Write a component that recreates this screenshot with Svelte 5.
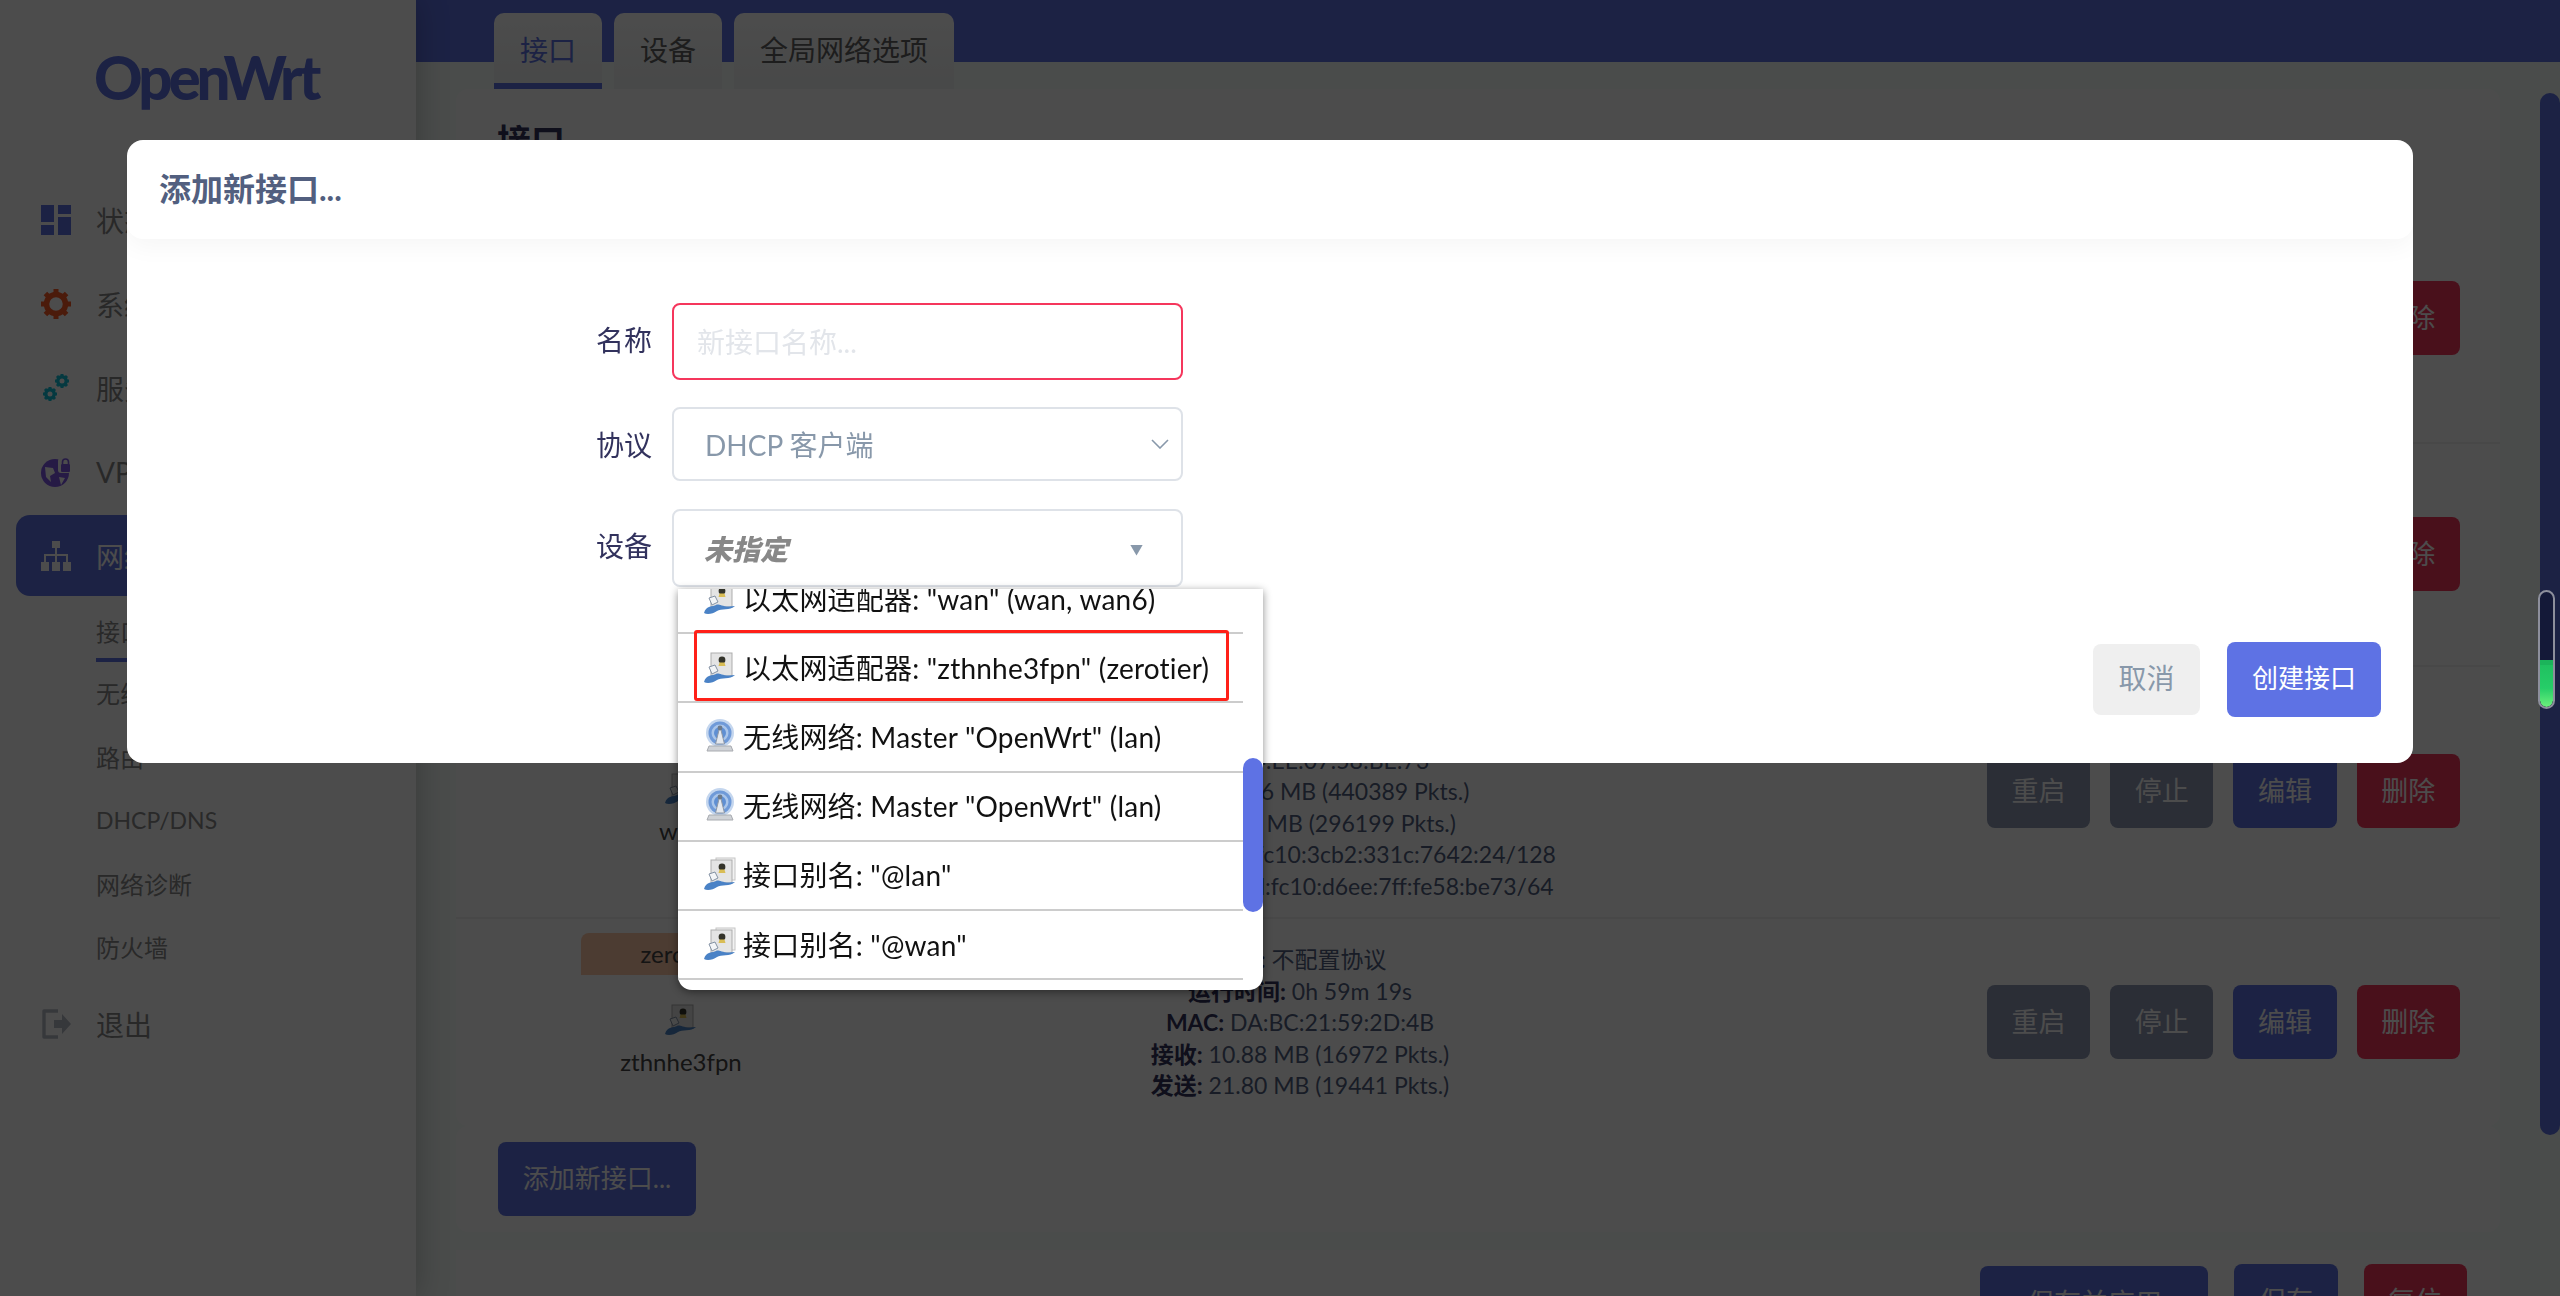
<script>
  const mainMenu = [
    { label: "状态", icon: "status" },
    { label: "系统", icon: "system" },
    { label: "服务", icon: "services" },
    { label: "VPN", icon: "vpn" },
  ];
  const subMenu = ["接口", "无线", "路由", "DHCP/DNS", "网络诊断", "防火墙"];
  const tabs = ["接口", "设备", "全局网络选项"];
  const rowActions = [
    { label: "重启", kind: "muted" },
    { label: "停止", kind: "muted" },
    { label: "编辑", kind: "primary" },
    { label: "删除", kind: "danger" },
  ];
  const wanLines = [
    ["协议:", "DHCP 客户端"],
    ["运行时间:", "0h 59m 40s"],
    ["MAC:", "D4:EE:07:58:BE:73"],
    ["接收:", "1234.56 MB (440389 Pkts.)"],
    ["发送:", "12.45 MB (296199 Pkts.)"],
    ["IPv6:", "fd00:1a2b:3c4:fc10:3cb2:331c:7642:24/128"],
    ["IPv6:", "fd00:1a2b:3c4d:fc10:d6ee:7ff:fe58:be73/64"],
  ];
  const zeroLines = [
    ["协议:", "不配置协议"],
    ["运行时间:", "0h 59m 19s"],
    ["MAC:", "DA:BC:21:59:2D:4B"],
    ["接收:", "10.88 MB (16972 Pkts.)"],
    ["发送:", "21.80 MB (19441 Pkts.)"],
  ];
  const devices = [
    { icon: "ethernet", text: '以太网适配器: "wan" (wan, wan6)' },
    { icon: "ethernet", text: '以太网适配器: "zthnhe3fpn" (zerotier)' },
    { icon: "wifi", text: '无线网络: Master "OpenWrt" (lan)' },
    { icon: "wifi", text: '无线网络: Master "OpenWrt" (lan)' },
    { icon: "alias", text: '接口别名: "@lan"' },
    { icon: "alias", text: '接口别名: "@wan"' },
  ];
</script>

{#snippet menuIcon(name)}
  <svg class="menu-icon" viewBox="0 0 30 30" aria-hidden="true">
    {#if name === "status"}
      <g fill="#5e72e4">
        <rect x="0" y="0" width="13" height="17" />
        <rect x="0" y="20" width="13" height="10" />
        <rect x="17" y="0" width="13" height="9" />
        <rect x="17" y="12" width="13" height="18" />
      </g>
    {:else if name === "system"}
      <g fill="none" stroke="#fb5a26">
        <circle cx="15" cy="15" r="9.5" stroke-width="5.5" />
        <path d="M15 0v5M15 25v5M0 15h5M25 15h5M4.4 4.4l3.5 3.5M22 22l3.6 3.6M4.4 25.6L8 22M22 8l3.6-3.6" stroke-width="5" />
      </g>
    {:else if name === "services"}
      <g fill="none" stroke="#11bfd8">
        <circle cx="9" cy="21" r="4.2" stroke-width="3.4" />
        <path d="M9 14v3M9 25v3M2 21h3M13 21h3M4 16l2 2M12 24l2 2M4 26l2-2M12 18l2-2" stroke-width="3" />
        <circle cx="21" cy="8" r="4.2" stroke-width="3.4" />
        <path d="M21 1v3M21 12v3M14 8h3M25 8h3M16 3l2 2M24 11l2 2M16 13l2-2M24 5l2-2" stroke-width="3" />
      </g>
    {:else if name === "vpn"}
      <circle cx="14" cy="16" r="14" fill="#8059e8" />
      <path d="M4 10l8 1 2 5-5 3 1 6-5-5zM18 20l6 1-4 7z" fill="#fff" />
      <rect x="17" y="1" width="13" height="15" rx="3" fill="#fff" />
      <rect x="20" y="7" width="9" height="8" rx="1" fill="#8059e8" />
      <path d="M21.5 7V5a3 3 0 016 0v2" fill="none" stroke="#8059e8" stroke-width="1.6" />
    {:else if name === "network"}
      <g fill="#fff">
        <rect x="11" y="0" width="8" height="7" />
        <rect x="0" y="21" width="8" height="9" />
        <rect x="11" y="21" width="8" height="9" />
        <rect x="22" y="21" width="8" height="9" />
        <path d="M14 7h2v6h11v8h-2v-6H16v6h-2v-6H5v6H3v-8h11z" />
      </g>
    {:else}
      <g fill="none" stroke="#b6bbc6" stroke-width="3.4">
        <path d="M17 2H3v26h14" stroke-linejoin="round" />
      </g>
      <path d="M13 11h8V5l9 10-9 10v-6h-8z" fill="#b6bbc6" />
    {/if}
  </svg>
{/snippet}

{#snippet deviceIcon(kind)}
  <svg class="device-icon" viewBox="0 0 32 34" aria-hidden="true">
    {#if kind === "wifi"}
      <circle cx="16" cy="14" r="14" fill="#c4d6ee" />
      <circle cx="16" cy="14" r="11.5" fill="#6f9ad8" />
      <circle cx="16" cy="14" r="8.5" fill="#a9c5ea" />
      <circle cx="16" cy="14" r="6" fill="#5f8fd3" />
      <path d="M16 7l4.5 18h-9z" fill="#e4e8ee" stroke="#8d97a5" />
      <circle cx="16" cy="9" r="2.4" fill="#6d7a8a" />
      <path d="M5 27h22l2 5H3z" fill="#cfd2d6" stroke="#a8abb0" />
    {:else}
      {#if kind === "alias"}
        <rect x="12" y="1" width="19" height="22" fill="#f2f2f2" stroke="#c6c6c6" />
      {/if}
      <rect x="7" y="3" width="21" height="23" fill="#e4e4e4" stroke="#adadad" />
      <circle cx="18" cy="10" r="3.4" fill="#33332a" />
      <path d="M15.5 12.5h5l1 3.5h-7z" fill="#d9bd55" />
      <path d="M5 17l6-2 3 6-6 3z" fill="#f2f4f6" stroke="#8492a4" />
      <path d="M0 32c2-8 9-6 12-8s6 3 19 1c-5 5-14 2-18 5s-10 4-13 2z" fill="#4a82c6" />
    {/if}
  </svg>
{/snippet}

{#snippet detailLines(lines)}
  <div class="details">
    {#each lines as [key, val]}
      <div class="line"><b>{key}</b> {val}</div>
    {/each}
  </div>
{/snippet}

{#snippet actions()}
  <div class="actions">
    {#each rowActions as a}
      <button class="btn {a.kind}">{a.label}</button>
    {/each}
  </div>
{/snippet}

<div class="page">
  <aside class="sidebar">
    <div class="logo">OpenWrt</div>
    <nav class="nav">
      {#each mainMenu as item}
        <div class="nav-item">
          {@render menuIcon(item.icon)}
          <span>{item.label}</span>
        </div>
      {/each}
      <div class="nav-item active">
        {@render menuIcon("network")}
        <span>网络</span>
      </div>
      <div class="sub-nav">
        {#each subMenu as item, i}
          <div class="sub-item" class:current={i === 0} class:latin={item === "DHCP/DNS"}>
            <span>{item}</span>
          </div>
        {/each}
      </div>
      <div class="nav-item logout">
        {@render menuIcon("logout")}
        <span>退出</span>
      </div>
    </nav>
  </aside>

  <main class="main">
    <div class="tabs">
      {#each tabs as tab, i}
        <div class="tab" class:selected={i === 0}>{tab}</div>
      {/each}
    </div>
    <section class="card interfaces">
      <h2 class="heading">接口</h2>
      <div class="row row-lan">{@render actions()}</div>
      <div class="row row-wan">{@render actions()}</div>
      <div class="row row-wan6">
        <div class="iface">
          {@render deviceIcon("ethernet")}
          <span class="iface-name">wan</span>
        </div>
        {@render detailLines(wanLines)}
        {@render actions()}
      </div>
      <div class="row row-zero">
        <div class="iface">
          <div class="iface-tag">zerotier</div>
          {@render deviceIcon("ethernet")}
          <span class="iface-name">zthnhe3fpn</span>
        </div>
        {@render detailLines(zeroLines)}
        {@render actions()}
      </div>
    </section>
    <section class="card add-card">
      <button class="btn primary">添加新接口...</button>
    </section>
    <footer class="page-actions">
      <button class="btn primary wide">保存并应用</button>
      <button class="btn primary">保存</button>
      <button class="btn danger">复位</button>
    </footer>
  </main>
  <div class="page-scroll"></div>
</div>

<div class="overlay">
  <div class="modal">
    <h4 class="modal-title">添加新接口...</h4>
    <div class="form">
      <div class="field">
        <span class="field-label raised">名称</span>
        <input class="control invalid" placeholder="新接口名称..." />
      </div>
      <div class="field field-proto">
        <span class="field-label">协议</span>
        <div class="control select">
          <span>DHCP 客户端</span>
          <svg class="chevron" viewBox="0 0 18 10" aria-hidden="true">
            <path d="M1 1l8 8 8-8" fill="none" stroke="#8898aa" stroke-width="1.6" />
          </svg>
        </div>
      </div>
      <div class="field field-device">
        <span class="field-label raised">设备</span>
        <div class="control combo">
          <em>未指定</em>
          <span class="combo-arrow">▼</span>
        </div>
        <div class="dropdown">
          <ul class="device-list">
            {#each devices as d}
              <li class="device-row">
                {@render deviceIcon(d.icon)}
                <span>{d.text}</span>
              </li>
            {/each}
          </ul>
          <div class="dropdown-thumb"></div>
        </div>
        <div class="annotation"></div>
      </div>
    </div>
    <div class="modal-actions">
      <button class="btn cancel">取消</button>
      <button class="btn create">创建接口</button>
    </div>
  </div>
</div>

<div class="capsule"><div class="capsule-fill"></div></div>

<style>
  :global(body) {
    margin: 0;
    overflow: hidden;
  }

  .page,
  .overlay,
  .capsule {
    font-family: Lato, "Noto Sans CJK SC", sans-serif;
  }

  .page {
    display: flex;
    height: 1296px;
    overflow: hidden;
    position: relative;
    color: #525f7f;
  }

  .sidebar {
    width: 416px;
    flex-shrink: 0;
    background: #fff;
    box-shadow: 0 0 30px rgba(0, 0, 0, 0.25);
    position: relative;
    z-index: 1;
  }

  .logo {
    height: 178px;
    padding: 39px 0 0 94px;
    box-sizing: border-box;
    font-size: 60px;
    font-weight: 900;
    letter-spacing: -4px;
    color: #5e72e4;
    line-height: 76px;
  }

  .nav {
    display: flex;
    flex-direction: column;
    padding-left: 16px;
  }

  .nav-item {
    display: flex;
    align-items: center;
    gap: 25px;
    height: 84px;
    padding-left: 25px;
    font-size: 28px;
    color: #888;
    border-radius: 14px 0 0 14px;
    margin-top: 0;
  }

  .menu-icon {
    width: 30px;
    height: 30px;
    flex-shrink: 0;
  }

  .nav-item.active {
    height: 81px;
    margin-top: 1px;
    background: #5e72e4;
    color: #fff;
  }

  .sub-nav {
    padding: 12px 0 0 80px;
    display: flex;
    flex-direction: column;
    font-size: 24px;
    color: #8a8a8a;
  }

  .sub-item {
    height: 63.5px;
    display: flex;
    align-items: center;
  }

  .sub-item.latin {
    font-size: 23px;
  }

  .sub-item.current {
    height: 44px;
    padding-bottom: 6px;
    margin-bottom: -1px;
    border-bottom: 4px solid #5e72e4;
    width: 60px;
  }

  .nav-item.logout {
    margin-top: 3px;
    color: #888;
  }

  .main {
    flex: 1;
    min-width: 0;
    padding: 13px 60px 0 40px;
    background: linear-gradient(#5e72e4 62px, #f7fdfa 62px);
    display: flex;
    flex-direction: column;
  }

  .tabs {
    display: flex;
    gap: 12px;
    padding-left: 38px;
    height: 76px;
    flex-shrink: 0;
  }

  .tab {
    padding: 0 26px;
    height: 76px;
    box-sizing: border-box;
    font-size: 28px;
    line-height: 74px;
    color: #626262;
    background: linear-gradient(#fff, #f0f3f3);
    border-radius: 10px 10px 0 0;
  }

  .tab.selected {
    color: #5e72e4;
    border-bottom: 6px solid #5e72e4;
  }

  .card {
    background: #fff;
    border-radius: 12px;
    flex-shrink: 0;
  }

  .interfaces {
    height: 1037px;
  }

  .heading {
    margin: 0;
    height: 104px;
    padding: 27px 0 0 41px;
    box-sizing: border-box;
    font-size: 34px;
    line-height: 50px;
    color: #32325d;
  }

  .row {
    display: grid;
    grid-template-columns: 450px 788px 1fr;
    align-items: center;
    position: relative;
    box-shadow: inset 0 2px 0 #f2f2f2;
  }

  .row-lan {
    height: 249px;
    box-shadow: none;
  }

  .row-wan {
    height: 223px;
  }

  .row-wan6 {
    height: 252px;
  }

  .row-zero {
    height: 210px;
  }

  .row-lan .actions,
  .row-wan .actions {
    grid-column: 3;
  }

  .iface {
    display: flex;
    flex-direction: column;
    align-items: center;
    font-size: 24px;
    color: #444;
  }

  .row-wan6 .iface {
    padding-top: 36px;
  }

  .row-zero .iface {
    align-self: start;
    padding-top: 16px;
  }

  .iface-tag {
    width: 200px;
    height: 42px;
    line-height: 42px;
    margin-bottom: 27px;
    text-align: center;
    background: #ffc8a8;
    border-radius: 8px 8px 0 0;
  }

  .iface-name {
    margin-top: 10px;
    line-height: 32px;
  }

  .details {
    text-align: center;
    font-size: 23px;
    line-height: 31.5px;
    white-space: nowrap;
    padding-top: 2px;
  }

  .details b {
    color: #32325d;
  }

  .actions {
    display: flex;
    justify-content: flex-end;
    gap: 20px;
    padding-right: 40px;
  }

  .btn {
    font-family: inherit;
    font-size: 27px;
    line-height: 1;
    border: none;
    color: #fff;
    height: 74px;
    width: 103.3px;
    padding: 0 0 1px;
    border-radius: 8px;
  }

  .btn.muted {
    background: #8f99b4;
  }

  .btn.primary {
    background: #5e72e4;
  }

  .btn.danger {
    background: #f5365c;
  }

  .add-card {
    height: 106px;
    padding: 16px 0 0 42px;
    box-sizing: border-box;
  }

  .add-card .btn {
    width: 198px;
    font-size: 26px;
    padding-bottom: 3px;
  }

  .page-actions {
    display: flex;
    justify-content: flex-end;
    align-items: flex-start;
    gap: 26px;
    margin-top: 18px;
    padding: 14px 33px 0 0;
    height: 60px;
    background: #fff;
    box-sizing: border-box;
    flex-shrink: 0;
  }

  .page-actions .btn {
    flex-shrink: 0;
  }

  .page-actions .wide {
    width: 228px;
    margin-top: 2px;
  }

  .page-scroll {
    position: absolute;
    right: 0;
    top: 93px;
    width: 20px;
    height: 1042px;
    border-radius: 10px;
    background: #5e72e4;
  }

  .overlay {
    position: fixed;
    inset: 0;
    z-index: 5;
    background: rgba(0, 0, 0, 0.7);
    padding: 140px 0 0 127px;
    box-sizing: border-box;
  }

  .modal {
    width: 2286px;
    height: 623px;
    background: #fff;
    border-radius: 16px;
    display: flex;
    flex-direction: column;
    position: relative;
  }

  .modal-title {
    margin: 0;
    height: 99px;
    padding-left: 32px;
    flex-shrink: 0;
    font-size: 32px;
    line-height: 98px;
    font-weight: 700;
    color: #525f7f;
    border-radius: 16px;
    box-shadow: 0 8px 24px rgba(0, 0, 0, 0.04);
  }

  .form {
    padding: 64px 0 0 469px;
    display: flex;
    flex-direction: column;
  }

  .field {
    display: flex;
    align-items: center;
    position: relative;
  }

  .field-proto {
    margin-top: 27px;
  }

  .field-device {
    margin-top: 28px;
  }

  .field-label {
    width: 76px;
    flex-shrink: 0;
    font-size: 28px;
    color: #32325d;
  }

  .field-label.raised {
    padding-bottom: 6px;
  }

  .control {
    width: 511px;
    height: 77px;
    box-sizing: border-box;
    border: 2px solid #dee2e8;
    border-radius: 8px;
    background: #fff;
    font-family: inherit;
    font-size: 28px;
    padding: 0 23px;
    display: flex;
    align-items: center;
    justify-content: space-between;
    outline: none;
  }

  .control.invalid {
    border-color: #f5365c;
  }

  .control::placeholder {
    color: #e2e5ea;
  }

  .select {
    height: 74px;
    color: #8898aa;
    padding-left: 31px;
  }

  .chevron {
    width: 18px;
    height: 10px;
    margin-right: -11px;
  }

  .combo {
    height: 78px;
    padding-left: 30px;
  }

  .combo em {
    font-weight: 900;
    color: #888;
  }

  .combo-arrow {
    font-size: 13px;
    color: #8898aa;
    margin-right: 15px;
  }

  .dropdown {
    position: absolute;
    left: 82px;
    top: 80px;
    width: 585px;
    height: 401px;
    background: #fff;
    overflow: hidden;
    border-radius: 0 0 14px 14px;
    box-shadow: 0 2px 8px rgba(0, 0, 0, 0.45);
    z-index: 2;
  }

  .device-list {
    list-style: none;
    margin: -24px 20px 0 0;
    padding: 0;
  }

  .device-row {
    height: 69.2px;
    box-sizing: border-box;
    border-bottom: 2px solid #ccc;
    display: flex;
    align-items: center;
    gap: 7px;
    padding: 0 0 2px 26px;
    font-size: 28px;
    letter-spacing: 0.2px;
    color: #111;
    white-space: nowrap;
  }

  .device-icon {
    width: 32px;
    height: 34px;
    flex-shrink: 0;
  }

  .dropdown-thumb {
    position: absolute;
    right: 0;
    top: 169px;
    width: 20px;
    height: 154px;
    border-radius: 10px;
    background: #5e72e4;
  }

  .annotation {
    position: absolute;
    left: 98px;
    top: 121px;
    width: 535px;
    height: 71px;
    box-sizing: border-box;
    border: 3px solid #ff2018;
    border-radius: 3px;
    z-index: 3;
  }

  .modal-actions {
    position: absolute;
    right: 32px;
    bottom: 46px;
    display: flex;
    align-items: center;
    gap: 27px;
  }

  .btn.cancel {
    width: 107px;
    height: 71px;
    font-size: 28px;
    padding-bottom: 3px;
    background: #efefef;
    color: #8898aa;
  }

  .btn.create {
    width: 154px;
    height: 75px;
    font-size: 26px;
    padding-bottom: 3px;
    background: #5e72e4;
  }

  .capsule {
    position: fixed;
    left: 2538px;
    top: 590px;
    width: 17px;
    height: 119px;
    box-sizing: border-box;
    border: 2px solid #8d8f9c;
    border-radius: 9px;
    background: #141938;
    z-index: 6;
    overflow: hidden;
    display: flex;
    align-items: flex-end;
  }

  .capsule-fill {
    width: 100%;
    height: 47px;
    background: linear-gradient(#1bb45a 0 5px, #20c160 5px, #26cd68 60%, #6cf07c);
    border-radius: 0 0 8px 8px;
  }
</style>
